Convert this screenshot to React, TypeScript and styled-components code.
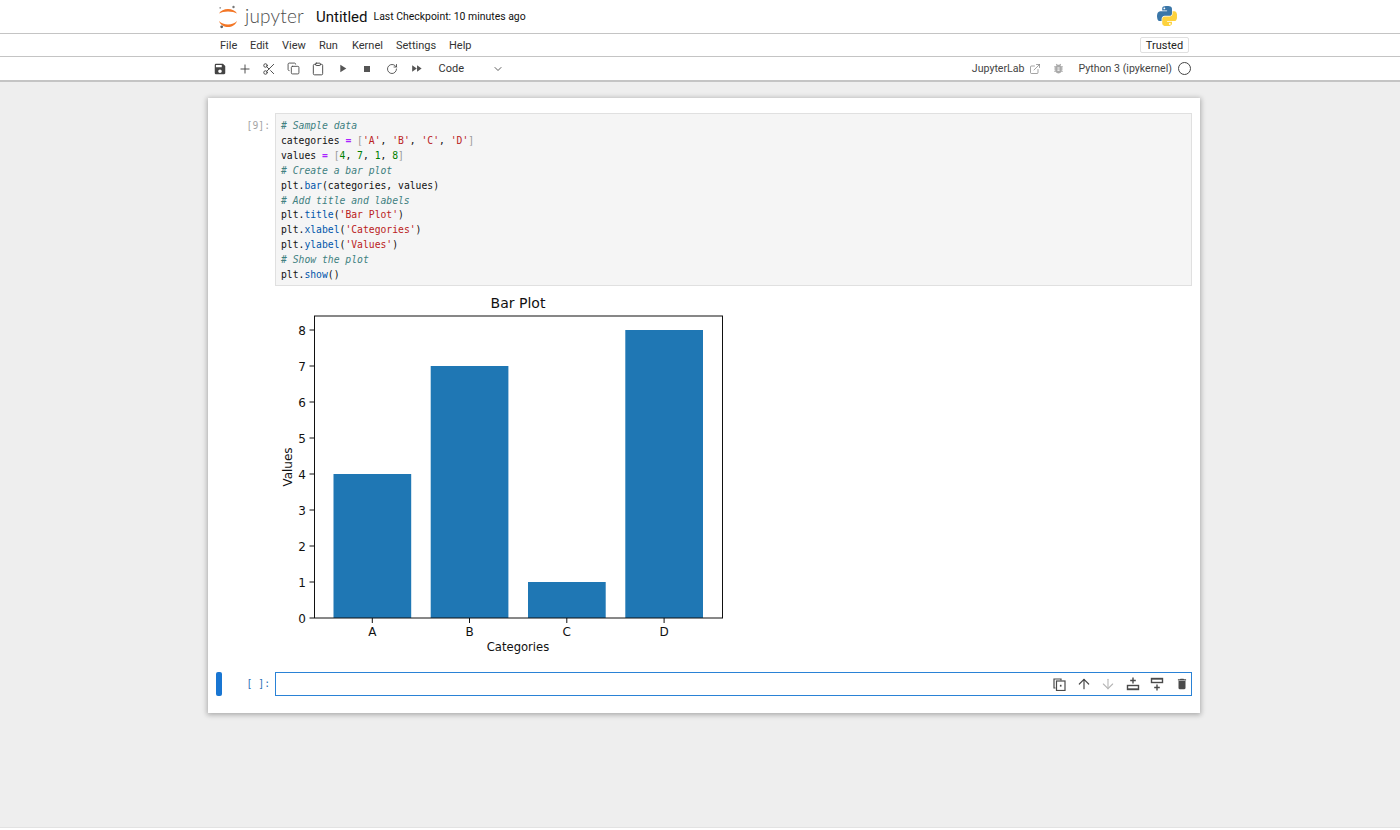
import React from "react";
import styled, { createGlobalStyle } from "styled-components";
import { ArrowDown, ArrowUp, ChevronDown, Clipboard, Copy, ExternalLink, Plus, RotateCw, Scissors } from "lucide-react";
import { MdBugReport, MdDelete, MdFastForward, MdPlayArrow, MdSave, MdStop } from "react-icons/md";

const Global = createGlobalStyle`
  html, body { margin: 0; padding: 0; background: #eeeeee; }
  * { box-sizing: border-box; }
`;

const uiFont = `"Roboto", "Noto Sans", sans-serif`;
const monoFont = `"DejaVu Sans Mono", "Liberation Mono", monospace`;

const Page = styled.div`
  width: 1400px;
  height: 830px;
  overflow: hidden;
  display: flex;
  flex-direction: column;
  background: #eeeeee;
  font-family: ${uiFont};
  color: #212121;
`;

const Bar = styled.div<{ $h: number; $line?: number }>`
  height: ${(p) => p.$h}px;
  flex: none;
  background: #fff;
  border-bottom: ${(p) => p.$line ?? 1}px solid #c4c4c4;
`;

const BarInner = styled.div`
  width: 992px;
  height: 100%;
  margin-left: 208px;
  display: flex;
  align-items: center;
`;

const HeaderInner = styled(BarInner)`
  padding: 0 23px 0 10px;
`;

const LogoWord = styled.span`
  font-family: "Lato", "Noto Sans", sans-serif;
  font-size: 19px;
  font-weight: 300;
  letter-spacing: 0.2px;
  color: #4e4e4e;
  margin-left: 7px;
  line-height: 1;
  position: relative;
  top: -1px;
`;

const Title = styled.span`
  font-size: 15px;
  color: #111;
  margin-left: 12px;
`;

const Checkpoint = styled.span`
  font-size: 10.45px;
  color: #111;
  margin-left: 6px;
`;

const Spacer = styled.div`
  flex: 1;
`;

const MenuInner = styled(BarInner)`
  padding: 0 11px 0 12px;
`;

const MenuItem = styled.span<{ $w: number }>`
  width: ${(p) => p.$w}px;
  font-size: 11px;
  color: #333;
`;

const Trusted = styled.div`
  height: 16px;
  width: 49px;
  display: flex;
  align-items: center;
  justify-content: center;
  border: 1px solid #e0e0e0;
  border-radius: 2px;
  font-size: 11px;
  color: #222;
`;

const ToolInner = styled(BarInner)`
  padding: 0 9px 0 0;
`;

const ToolButton = styled.span<{ $soft?: boolean }>`
  width: 24.5px;
  height: 20px;
  flex: none;
  display: flex;
  align-items: center;
  justify-content: center;
  color: ${(p) => (p.$soft ? "#555" : "#444")};
`;

const KernelSelect = styled.div`
  width: 68px;
  margin-left: 10px;
  display: flex;
  align-items: center;
  justify-content: space-between;
  font-size: 11px;
  color: #333;
  padding-right: 3px;
`;

const ToolLabel = styled.span`
  font-size: 10.6px;
  color: #444;
`;

const ExtIcon = styled.span`
  display: flex;
  margin-left: 4px;
  color: #666;
`;

const BugIcon = styled.span`
  display: flex;
  margin: 0 13.5px 0 11.5px;
  color: #aaa;
`;

const KernelCircle = styled.span`
  width: 13px;
  height: 13px;
  margin-left: 6px;
  border: 1.3px solid #444;
  border-radius: 50%;
`;

const Main = styled.main`
  flex: 1;
  padding: 16px 0 0 208px;
`;

const Notebook = styled.section`
  width: 992px;
  height: 615px;
  padding: 15px 8px 0 8px;
  background: #fff;
  box-shadow: 0 1px 5px 1px rgba(0, 0, 0, 0.28);
  display: flex;
  flex-direction: column;
`;

const Footer = styled.footer`
  height: 3px;
  flex: none;
  background: #fff;
  border-top: 1px solid #e2e2e2;
`;

const Cell = styled.div`
  display: grid;
  grid-template-columns: 6px 53px 1fr;
`;

const Rail = styled.div<{ $on?: boolean }>`
  width: 6px;
  border-radius: 2px;
  background: ${(p) => (p.$on ? "#1976d2" : "transparent")};
`;

const Prompt = styled.div<{ $on?: boolean }>`
  font-family: ${monoFont};
  font-size: 9.75px;
  line-height: 15px;
  padding-top: 5px;
  padding-right: 5px;
  text-align: right;
  color: ${(p) => (p.$on ? "#2a6fb5" : "#a5a5a5")};
  white-space: pre;
`;

const Editor = styled.pre`
  margin: 0;
  height: 173px;
  padding: 5px 5px 0;
  background: #f5f5f5;
  border: 1px solid #e0e0e0;
  font-family: ${monoFont};
  font-size: 9.72px;
  line-height: 14.9px;
  color: #111;
`;

const tokenColors = { c: "#408080", o: "#aa22ff", s: "#ba2121", n: "#008000", b: "#999999", f: "#0055aa" };

const Tok = styled.span<{ $k: keyof typeof tokenColors }>`
  color: ${(p) => tokenColors[p.$k]};
  font-style: ${(p) => (p.$k === "c" ? "italic" : "normal")};
  font-weight: ${(p) => (p.$k === "o" ? 700 : 400)};
`;

const Output = styled.div`
  margin-left: 59px;
  height: 386px;
  padding-top: 6px;
`;

const Chart = styled.svg`
  display: block;
  font-family: "DejaVu Sans", sans-serif;
`;

const ActiveEditor = styled.div`
  height: 24px;
  border: 1px solid #2a82d6;
  display: flex;
  align-items: center;
  justify-content: flex-end;
  gap: 6.5px;
  padding-right: 0.5px;
`;

const CellTool = styled.span<{ $muted?: boolean }>`
  width: 18px;
  display: flex;
  justify-content: center;
  color: ${(p) => (p.$muted ? "#b5b5b5" : "#4a4a4a")};
`;

const PromptActive = styled(Prompt)`
  padding-top: 4px;
`;

const PythonSvg = styled.svg`
  margin-bottom: 2px;
`;

const JupyterMark = () => (
  <svg width="20" height="24" viewBox="0 0 20 24" aria-hidden="true">
    <path d="M1 8.5C4 2.5 16 2.5 19 8.5C15 5.8 5 5.8 1 8.5Z" fill="#f37626" />
    <path d="M1 16C4 24 16 24 19 16C15 20.5 5 20.5 1 16Z" fill="#f37626" />
    <circle cx="15.5" cy="2" r="1.2" fill="#767677" />
    <circle cx="2.2" cy="2.8" r="0.9" fill="#989798" />
    <circle cx="3.7" cy="21.8" r="1.4" fill="#616262" />
  </svg>
);

const PythonLogo = () => (
  <PythonSvg width="20" height="20" viewBox="0 0 110 110" aria-hidden="true">
    <path
      fill="#3a76a8"
      d="M54.9 0C50.3 0 46 .4 42.1 1.1 30.8 3.1 28.7 7.3 28.7 15v10.2h26.8v3.4H18.6c-7.8 0-14.6 4.7-16.7 13.6-2.5 10.2-2.6 16.6 0 27.3 1.9 7.9 6.5 13.6 14.2 13.6h9.2V71c0-8.8 7.7-16.7 16.8-16.7h26.8c7.5 0 13.4-6.1 13.4-13.6V15.2c0-7.3-6.1-12.7-13.4-13.9C64.3.3 59.5 0 54.9 0Zm-14.5 8.2c2.8 0 5 2.3 5 5.1 0 2.8-2.3 5.1-5 5.1-2.8 0-5-2.3-5-5.1 0-2.8 2.3-5.1 5-5.1Z"
    />
    <path
      fill="#fdd23e"
      d="M85.6 28.7v11.9c0 9.2-7.8 17-16.8 17H42.1c-7.3 0-13.4 6.3-13.4 13.6v25.5c0 7.3 6.3 11.5 13.4 13.6 8.5 2.5 16.6 2.9 26.8 0 6.8-2 13.4-5.9 13.4-13.6V86.5H55.5v-3.4h40.2c7.8 0 10.7-5.4 13.4-13.6 2.8-8.4 2.7-16.5 0-27.3-1.9-7.8-5.6-13.6-13.4-13.6Zm-15.1 64.6c2.8 0 5 2.3 5 5.1 0 2.8-2.3 5.1-5 5.1-2.8 0-5-2.3-5-5.1 0-2.8 2.3-5.1 5-5.1Z"
    />
  </PythonSvg>
);

const DuplicateIcon = () => (
  <svg width="13" height="13" viewBox="0 0 13 13" fill="none" stroke="currentColor" strokeWidth="1.2">
    <path d="M2.5 10H1V1h7v1.5" />
    <rect x="3.5" y="3" width="8.5" height="9.5" />
    <path d="M7.7 6.8v1.8" strokeWidth="1.6" />
  </svg>
);

const InsertAbove = () => (
  <svg width="14" height="14" viewBox="0 0 14 14" fill="none" stroke="currentColor">
    <path d="M7 .5v6M4.2 3.5h5.6" strokeWidth="1.4" />
    <rect x="1.5" y="8.5" width="11" height="4" strokeWidth="1.4" />
    <path d="M2 12h10" strokeWidth="1.2" />
  </svg>
);

const InsertBelow = () => (
  <svg width="14" height="14" viewBox="0 0 14 14" fill="none" stroke="currentColor">
    <path d="M7 7.5v6M4.2 10.5h5.6" strokeWidth="1.4" />
    <rect x="1.5" y="1.5" width="11" height="4" strokeWidth="1.4" />
    <path d="M2 2h10" strokeWidth="1.2" />
  </svg>
);

const bars = [
  { label: "A", x: 333.5, v: 4 },
  { label: "B", x: 430.7, v: 7 },
  { label: "C", x: 528, v: 1 },
  { label: "D", x: 625.3, v: 8 },
];
const y0 = 618;
const unit = 36;

const BarChart = () => (
  <Chart width="470" height="371" viewBox="275 292 470 371" role="img">
    {bars.map((b) => (
      <rect key={b.label} x={b.x} y={y0 - b.v * unit} width="77.7" height={b.v * unit} fill="#1f77b4" />
    ))}
    <rect x="314.5" y="316" width="408" height="302" fill="none" stroke="#111" strokeWidth="1" />
    {[0, 1, 2, 3, 4, 5, 6, 7, 8].map((t) => (
      <g key={t}>
        <line x1="309.5" x2="314" y1={y0 - t * unit} y2={y0 - t * unit} stroke="#111" />
        <text x="306" y={y0 - t * unit + 4.5} textAnchor="end" fontSize="12" fill="#111">
          {t}
        </text>
      </g>
    ))}
    {bars.map((b) => (
      <g key={b.label}>
        <line x1={b.x + 38.8} x2={b.x + 38.8} y1="618" y2="623" stroke="#111" />
        <text x={b.x + 38.8} y="635.5" textAnchor="middle" fontSize="12" fill="#111">
          {b.label}
        </text>
      </g>
    ))}
    <text x="518" y="308" textAnchor="middle" fontSize="14" fill="#111">
      Bar Plot
    </text>
    <text x="518" y="651" textAnchor="middle" fontSize="11.6" fill="#111">
      Categories
    </text>
    <text transform="translate(292 467) rotate(-90)" textAnchor="middle" fontSize="12" fill="#111">
      Values
    </text>
  </Chart>
);

const App = () => (
  <Page>
    <Global />
    <Bar $h={34}>
      <HeaderInner>
        <JupyterMark />
        <LogoWord>jupyter</LogoWord>
        <Title>Untitled</Title>
        <Checkpoint>Last Checkpoint: 10 minutes ago</Checkpoint>
        <Spacer />
        <PythonLogo />
      </HeaderInner>
    </Bar>
    <Bar $h={23}>
      <MenuInner>
        {[["File", 30], ["Edit", 32], ["View", 37], ["Run", 33], ["Kernel", 44], ["Settings", 53], ["Help", 40]].map(([t, w]) => (
          <MenuItem key={t as string} $w={w as number}>
            {t}
          </MenuItem>
        ))}
        <Spacer />
        <Trusted>Trusted</Trusted>
      </MenuInner>
    </Bar>
    <Bar $h={25} $line={2}>
      <ToolInner>
        <ToolButton><MdSave size={14} /></ToolButton>
        <ToolButton><Plus size={14} strokeWidth={1.6} /></ToolButton>
        <ToolButton><Scissors size={14} strokeWidth={1.6} /></ToolButton>
        <ToolButton><Copy size={13} strokeWidth={1.6} /></ToolButton>
        <ToolButton><Clipboard size={14} strokeWidth={1.6} /></ToolButton>
        <ToolButton $soft><MdPlayArrow size={13} /></ToolButton>
        <ToolButton $soft><MdStop size={12} /></ToolButton>
        <ToolButton><RotateCw size={12} strokeWidth={1.7} /></ToolButton>
        <ToolButton $soft><MdFastForward size={13} /></ToolButton>
        <KernelSelect>
          Code
          <ChevronDown size={12} strokeWidth={1.6} />
        </KernelSelect>
        <Spacer />
        <ToolLabel>JupyterLab</ToolLabel>
        <ExtIcon><ExternalLink size={12} strokeWidth={1.2} /></ExtIcon>
        <BugIcon><MdBugReport size={13} /></BugIcon>
        <ToolLabel>Python 3 (ipykernel)</ToolLabel>
        <KernelCircle />
      </ToolInner>
    </Bar>
    <Main>
      <Notebook>
        <Cell>
          <Rail />
          <Prompt>[9]:</Prompt>
          <Editor>
            <Tok $k="c"># Sample data</Tok>{"\n"}
            categories <Tok $k="o">=</Tok> <Tok $k="b">[</Tok><Tok $k="s">'A'</Tok>, <Tok $k="s">'B'</Tok>, <Tok $k="s">'C'</Tok>, <Tok $k="s">'D'</Tok><Tok $k="b">]</Tok>{"\n"}
            values <Tok $k="o">=</Tok> <Tok $k="b">[</Tok><Tok $k="n">4</Tok>, <Tok $k="n">7</Tok>, <Tok $k="n">1</Tok>, <Tok $k="n">8</Tok><Tok $k="b">]</Tok>{"\n"}
            <Tok $k="c"># Create a bar plot</Tok>{"\n"}
            plt.<Tok $k="f">bar</Tok>(categories, values){"\n"}
            <Tok $k="c"># Add title and labels</Tok>{"\n"}
            plt.<Tok $k="f">title</Tok>(<Tok $k="s">'Bar Plot'</Tok>){"\n"}
            plt.<Tok $k="f">xlabel</Tok>(<Tok $k="s">'Categories'</Tok>){"\n"}
            plt.<Tok $k="f">ylabel</Tok>(<Tok $k="s">'Values'</Tok>){"\n"}
            <Tok $k="c"># Show the plot</Tok>{"\n"}
            plt.<Tok $k="f">show</Tok>()
          </Editor>
        </Cell>
        <Output>
          <BarChart />
        </Output>
        <Cell>
          <Rail $on />
          <PromptActive $on>{"[ ]:"}</PromptActive>
          <ActiveEditor>
            <CellTool><DuplicateIcon /></CellTool>
            <CellTool><ArrowUp size={16} strokeWidth={1.8} /></CellTool>
            <CellTool $muted><ArrowDown size={16} strokeWidth={1.6} /></CellTool>
            <CellTool><InsertAbove /></CellTool>
            <CellTool><InsertBelow /></CellTool>
            <CellTool><MdDelete size={14} /></CellTool>
          </ActiveEditor>
        </Cell>
      </Notebook>
    </Main>
    <Footer />
  </Page>
);

export default App;
